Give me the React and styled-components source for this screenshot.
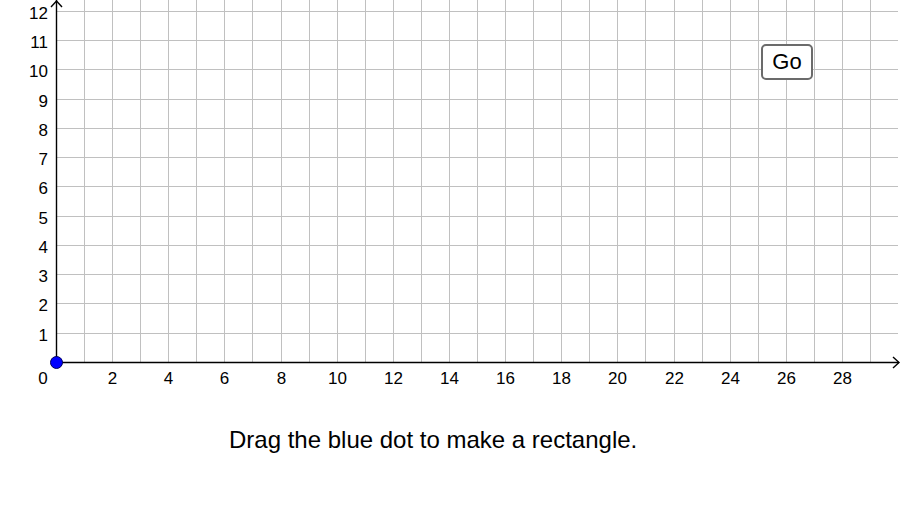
import React from "react";
import styled, { createGlobalStyle } from "styled-components";

const GlobalStyle = createGlobalStyle`
  html, body {
    margin: 0;
    padding: 0;
    background: #fff;
  }
  body {
    font-family: "Liberation Sans", Arial, sans-serif;
  }
`;

//#region layout

const Applet = styled.div`
  width: 901px;
  height: 511px;
  display: flex;
  flex-direction: column;
  background: #fff;
  overflow: hidden;
`;

const Board = styled.div`
  position: relative;
  width: 901px;
  height: 400px;
  flex-shrink: 0;
`;

const Caption = styled.p`
  margin: 0;
  padding: 26px 0 0 229px;
  font-size: 24px;
  line-height: 28px;
  color: #000;
  white-space: nowrap;
`;

const GoButton = styled.button`
  position: absolute;
  left: 761px;
  top: 44px;
  width: 52px;
  height: 36px;
  padding: 0;
  box-sizing: border-box;
  border: 2px solid #6b6b6b;
  border-radius: 5px;
  background: #fff;
  font-family: "Liberation Sans", Arial, sans-serif;
  font-size: 22px;
  color: #000;
  cursor: pointer;
`;

//#endregion

//#region graph

const ORIGIN_X = 56;
const ORIGIN_Y = 362;
const UNIT_X = 28.07;
const UNIT_Y = 29.25;
const RIGHT = 898;

const px = (k) => ORIGIN_X + Math.round(k * UNIT_X) + 0.5;
const py = (k) => ORIGIN_Y - Math.round(k * UNIT_Y) + 0.5;

const Label = styled.text`
  font-family: "Liberation Sans", Arial, sans-serif;
  font-size: 17px;
  fill: #000;
`;

const Graph = () => {
  const cols = Array.from({ length: 29 }, (_, i) => i + 1);
  const rows = Array.from({ length: 12 }, (_, i) => i + 1);
  const xLabels = Array.from({ length: 14 }, (_, i) => (i + 1) * 2);

  return (
    <svg width="901" height="400" viewBox="0 0 901 400">
      <g stroke="#c0c0c0" strokeWidth="1" shapeRendering="crispEdges">
        {cols.map((k) => (
          <line key={`c${k}`} x1={px(k)} y1="0" x2={px(k)} y2={ORIGIN_Y} />
        ))}
        {rows.map((k) => (
          <line key={`r${k}`} x1={ORIGIN_X} y1={py(k)} x2={RIGHT} y2={py(k)} />
        ))}
      </g>

      <g stroke="#000" strokeWidth="1.4" fill="none">
        <line x1={ORIGIN_X + 0.5} y1="0" x2={ORIGIN_X + 0.5} y2={ORIGIN_Y + 0.5} />
        <line x1={ORIGIN_X + 0.5} y1={ORIGIN_Y + 0.5} x2="899" y2={ORIGIN_Y + 0.5} />
        <polyline points={`${ORIGIN_X - 5},7 ${ORIGIN_X + 0.5},1 ${ORIGIN_X + 6},7`} />
        <polyline points={`893,${ORIGIN_Y - 5} 899,${ORIGIN_Y + 0.5} 893,${ORIGIN_Y + 6}`} />
      </g>

      {rows.map((k) => (
        <Label key={`yl${k}`} x="48" y={py(k) + 7} textAnchor="end">
          {k}
        </Label>
      ))}
      {xLabels.map((k) => (
        <Label key={`xl${k}`} x={px(k)} y="384" textAnchor="middle">
          {k}
        </Label>
      ))}
      <Label x="43" y="384" textAnchor="middle">
        0
      </Label>

      <circle cx={ORIGIN_X + 0.5} cy={ORIGIN_Y + 0.5} r="6" fill="#0000ff" stroke="#00005a" strokeWidth="1" />
    </svg>
  );
};

//#endregion

const App = () => (
  <>
    <GlobalStyle />
    <Applet>
      <Board>
        <Graph />
        <GoButton type="button">Go</GoButton>
      </Board>
      <Caption>Drag the blue dot to make a rectangle.</Caption>
    </Applet>
  </>
);

export default App;
